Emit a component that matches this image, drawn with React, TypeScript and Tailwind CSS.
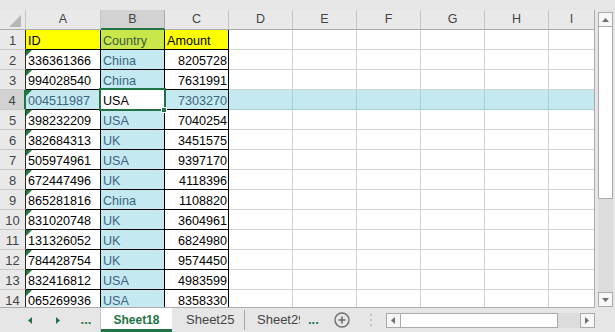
import React from "react";

const DATA: [string, string, string][] = [
  ["ID", "Country", "Amount"],
  ["336361366", "China", "8205728"],
  ["994028540", "China", "7631991"],
  ["004511987", "USA", "7303270"],
  ["398232209", "USA", "7040254"],
  ["382684313", "UK", "3451575"],
  ["505974961", "USA", "9397170"],
  ["672447496", "UK", "4118396"],
  ["865281816", "China", "1108820"],
  ["831020748", "UK", "3604961"],
  ["131326052", "UK", "6824980"],
  ["784428754", "UK", "9574450"],
  ["832416812", "USA", "4983599"],
  ["065269936", "USA", "8358330"],
];

const EMPTY_COLS = [
  { k: "D", w: "w-[64px] border-r" },
  { k: "E", w: "w-[64px] border-r" },
  { k: "F", w: "w-[64px] border-r" },
  { k: "G", w: "w-[64px] border-r" },
  { k: "H", w: "w-[64px] border-r" },
  { k: "I", w: "w-[45px]" },
];

const FONT = { fontFamily: '"Liberation Sans", Arial, sans-serif' };

function GreenTri() {
  return (
    <svg className="absolute left-0 top-0" width="6" height="6" viewBox="0 0 6 6">
      <polygon points="0,0 6,0 0,6" fill="#1d7a3a" />
    </svg>
  );
}

function HeaderRow() {
  return (
    <div className="flex h-[20px] shrink-0 text-[12.5px] leading-[19px] text-[#444]">
      <div className="w-[26px] h-full border-r border-b border-r-[#c4c4c4] border-b-[#ababab] bg-[#e9e9e9] relative">
        <svg className="absolute left-[9px] top-[5px]" width="12" height="12" viewBox="0 0 12 12">
          <polygon points="12,0 12,12 0,12" fill="#b7b7b7" />
        </svg>
      </div>
      <div className="w-[75px] h-full border-r border-b border-r-[#c4c4c4] border-b-[#ababab] bg-[#e9e9e9] text-center">A</div>
      <div className="w-[64px] h-full border-r border-r-[#ababab] border-b-2 border-b-[#217346] bg-[#d2d2d2] text-center">B</div>
      <div className="w-[64px] h-full border-r border-b border-r-[#c4c4c4] border-b-[#ababab] bg-[#e9e9e9] text-center">C</div>
      {EMPTY_COLS.map((c) => (
        <div
          key={c.k}
          className={`${c.w} h-full border-b border-r-[#c4c4c4] border-b-[#ababab] bg-[#e9e9e9] text-center`}
        >
          {c.k}
        </div>
      ))}
    </div>
  );
}

function DataRow({ r }: { r: number }) {
  const [a, b, c] = DATA[r - 1];
  const hl = r === 4;
  const head = r === 1;
  const hlText = "text-[#3a6580]";
  const cyan = "bg-[#c5e9f0]";

  let aCls = "bg-white text-black";
  let bCls = `${cyan} ${hlText}`;
  let cCls = "bg-white text-black text-right pr-[1px]";
  if (head) {
    aCls = "bg-[#ffff00] text-black";
    bCls = "bg-[#c9e74b] text-[#3b5a3e]";
    cCls = "bg-[#ffff00] text-black text-left pl-[2px]";
  } else if (hl) {
    aCls = `${cyan} ${hlText}`;
    bCls = "bg-white text-black";
    cCls = `${cyan} ${hlText} text-right pr-[1px]`;
  }

  return (
    <div className="flex h-[20px] shrink-0 text-[12.6px] leading-[22px]">
      <div
        className={`w-[26px] h-full border-b border-b-[#c8c8c8] text-center text-[13px] leading-[21px] text-[#444] ${
          hl ? "bg-[#d2d2d2] border-r-2 border-r-[#217346]" : "bg-[#e9e9e9] border-r border-r-[#2a2a2a]"
        }`}
      >
        {r}
      </div>
      <div className={`w-[75px] h-full border-r border-b border-black relative pl-[2px] overflow-hidden whitespace-nowrap ${aCls}`}>
        {!head && <GreenTri />}
        {a}
      </div>
      <div className={`w-[64px] h-full border-r border-b border-black pl-[2px] overflow-hidden whitespace-nowrap ${bCls}`}>
        {b}
      </div>
      <div className={`w-[64px] h-full border-r border-b border-black overflow-hidden whitespace-nowrap ${cCls}`}>
        {c}
      </div>
      {EMPTY_COLS.map((col) => (
        <div
          key={col.k}
          className={`${col.w} h-full border-b ${
            hl ? "bg-[#c5e9f0] border-[#a9d0d7]" : "bg-white border-[#d4d4d4]"
          }`}
        />
      ))}
    </div>
  );
}

function ArrowUp() {
  return (
    <svg width="7" height="4" viewBox="0 0 7 4">
      <polygon points="0,4 7,4 3.5,0" fill="#707070" />
    </svg>
  );
}
function ArrowDown() {
  return (
    <svg width="7" height="4" viewBox="0 0 7 4">
      <polygon points="0,0 7,0 3.5,4" fill="#707070" />
    </svg>
  );
}
function ArrowLeft({ color = "#707070" }: { color?: string }) {
  return (
    <svg width="4" height="7" viewBox="0 0 4 7">
      <polygon points="4,0 4,7 0,3.5" fill={color} />
    </svg>
  );
}
function ArrowRight({ color = "#707070" }: { color?: string }) {
  return (
    <svg width="4" height="7" viewBox="0 0 4 7">
      <polygon points="0,0 0,7 4,3.5" fill={color} />
    </svg>
  );
}

export default function App() {
  const rows = Array.from({ length: 14 }, (_, i) => i + 1);
  return (
    <div className="w-[615px] h-[332px] bg-[#e6e6e6] overflow-hidden flex flex-col" style={FONT}>
      <div className="h-[10px] shrink-0" />
      <div className="flex h-[298px] shrink-0">
        {/* grid */}
        <div className="w-[595px] h-[298px] border-r border-b border-[#ababab] overflow-hidden relative bg-white">
          <HeaderRow />
          {rows.map((r) => (
            <DataRow key={r} r={r} />
          ))}
          {/* active cell */}
          <div className="absolute left-[99px] top-[78px] w-[67px] h-[23px] border-2 border-[#217346]" />
          <div className="absolute left-[161px] top-[97px] w-[6px] h-[6px] bg-[#217346] border border-white" />
        </div>
        {/* vertical scrollbar */}
        <div className="ml-[3px] mt-[2px] w-[15px] h-[295px] flex flex-col">
          <div className="h-[15px] border border-[#ababab] bg-[#f7f7f7] flex items-center justify-center">
            <ArrowUp />
          </div>
          <div className="h-[172px] bg-white border border-t-0 border-[#ababab]" />
          <div className="flex-1 bg-[#dcdcdc]" />
          <div className="h-[15px] border border-[#ababab] bg-[#f7f7f7] flex items-center justify-center">
            <ArrowDown />
          </div>
        </div>
      </div>
      {/* tab bar */}
      <div className="flex h-[24px] shrink-0 items-center">
        <div className="w-[100px] h-full flex items-center pl-[20px] gap-[8px]">
          <div className="w-[20px] flex justify-center">
            <ArrowLeft color="#217346" />
          </div>
          <div className="w-[20px] flex justify-center">
            <ArrowRight color="#217346" />
          </div>
          <div className="w-[20px] text-center text-[13px] font-bold text-[#217346] leading-none pb-[2px]">...</div>
        </div>
        <div className="w-[72px] h-full bg-white border-l border-[#c6c6c6] relative flex items-center justify-center">
          <span className="text-[12px] font-bold text-[#217346]">Sheet18</span>
          <div className="absolute left-0 right-0 bottom-0 h-[3px] bg-[#217346]" />
        </div>
        <div className="w-[72px] h-full flex items-center pl-[14px] text-[13px] text-[#444] whitespace-nowrap">
          Sheet25
        </div>
        <div className="w-px h-[20px] bg-[#a6a6a6]" />
        <div className="w-[55px] h-full flex items-center pl-[12px] text-[13px] text-[#444] whitespace-nowrap overflow-hidden">
          Sheet29
        </div>
        <div className="ml-[8px] text-[13px] font-bold text-[#217346] leading-none pb-[2px]">...</div>
        <div className="ml-[15px] w-[16px] h-[16px] flex items-center justify-center">
          <svg width="16" height="16" viewBox="0 0 16 16">
            <circle cx="8" cy="8" r="7" fill="none" stroke="#6e6e6e" strokeWidth="1.4" />
            <line x1="4.5" y1="8" x2="11.5" y2="8" stroke="#6e6e6e" strokeWidth="1.6" />
            <line x1="8" y1="4.5" x2="8" y2="11.5" stroke="#6e6e6e" strokeWidth="1.6" />
          </svg>
        </div>
        <div className="ml-[20px] w-[2px] h-[12px] flex flex-col justify-between">
          <div className="w-[2px] h-[2px] bg-[#c2c2c2]" />
          <div className="w-[2px] h-[2px] bg-[#c2c2c2]" />
          <div className="w-[2px] h-[2px] bg-[#c2c2c2]" />
        </div>
        <div className="ml-[14px] w-[209px] h-[15px] flex">
          <div className="w-[15px] h-full border border-[#ababab] bg-[#f7f7f7] flex items-center justify-center">
            <ArrowLeft />
          </div>
          <div className="w-[157px] h-full bg-white border border-l-0 border-[#ababab]" />
          <div className="flex-1 bg-[#dcdcdc]" />
          <div className="w-[15px] h-full border border-[#ababab] bg-[#f7f7f7] flex items-center justify-center">
            <ArrowRight />
          </div>
        </div>
      </div>
    </div>
  );
}
